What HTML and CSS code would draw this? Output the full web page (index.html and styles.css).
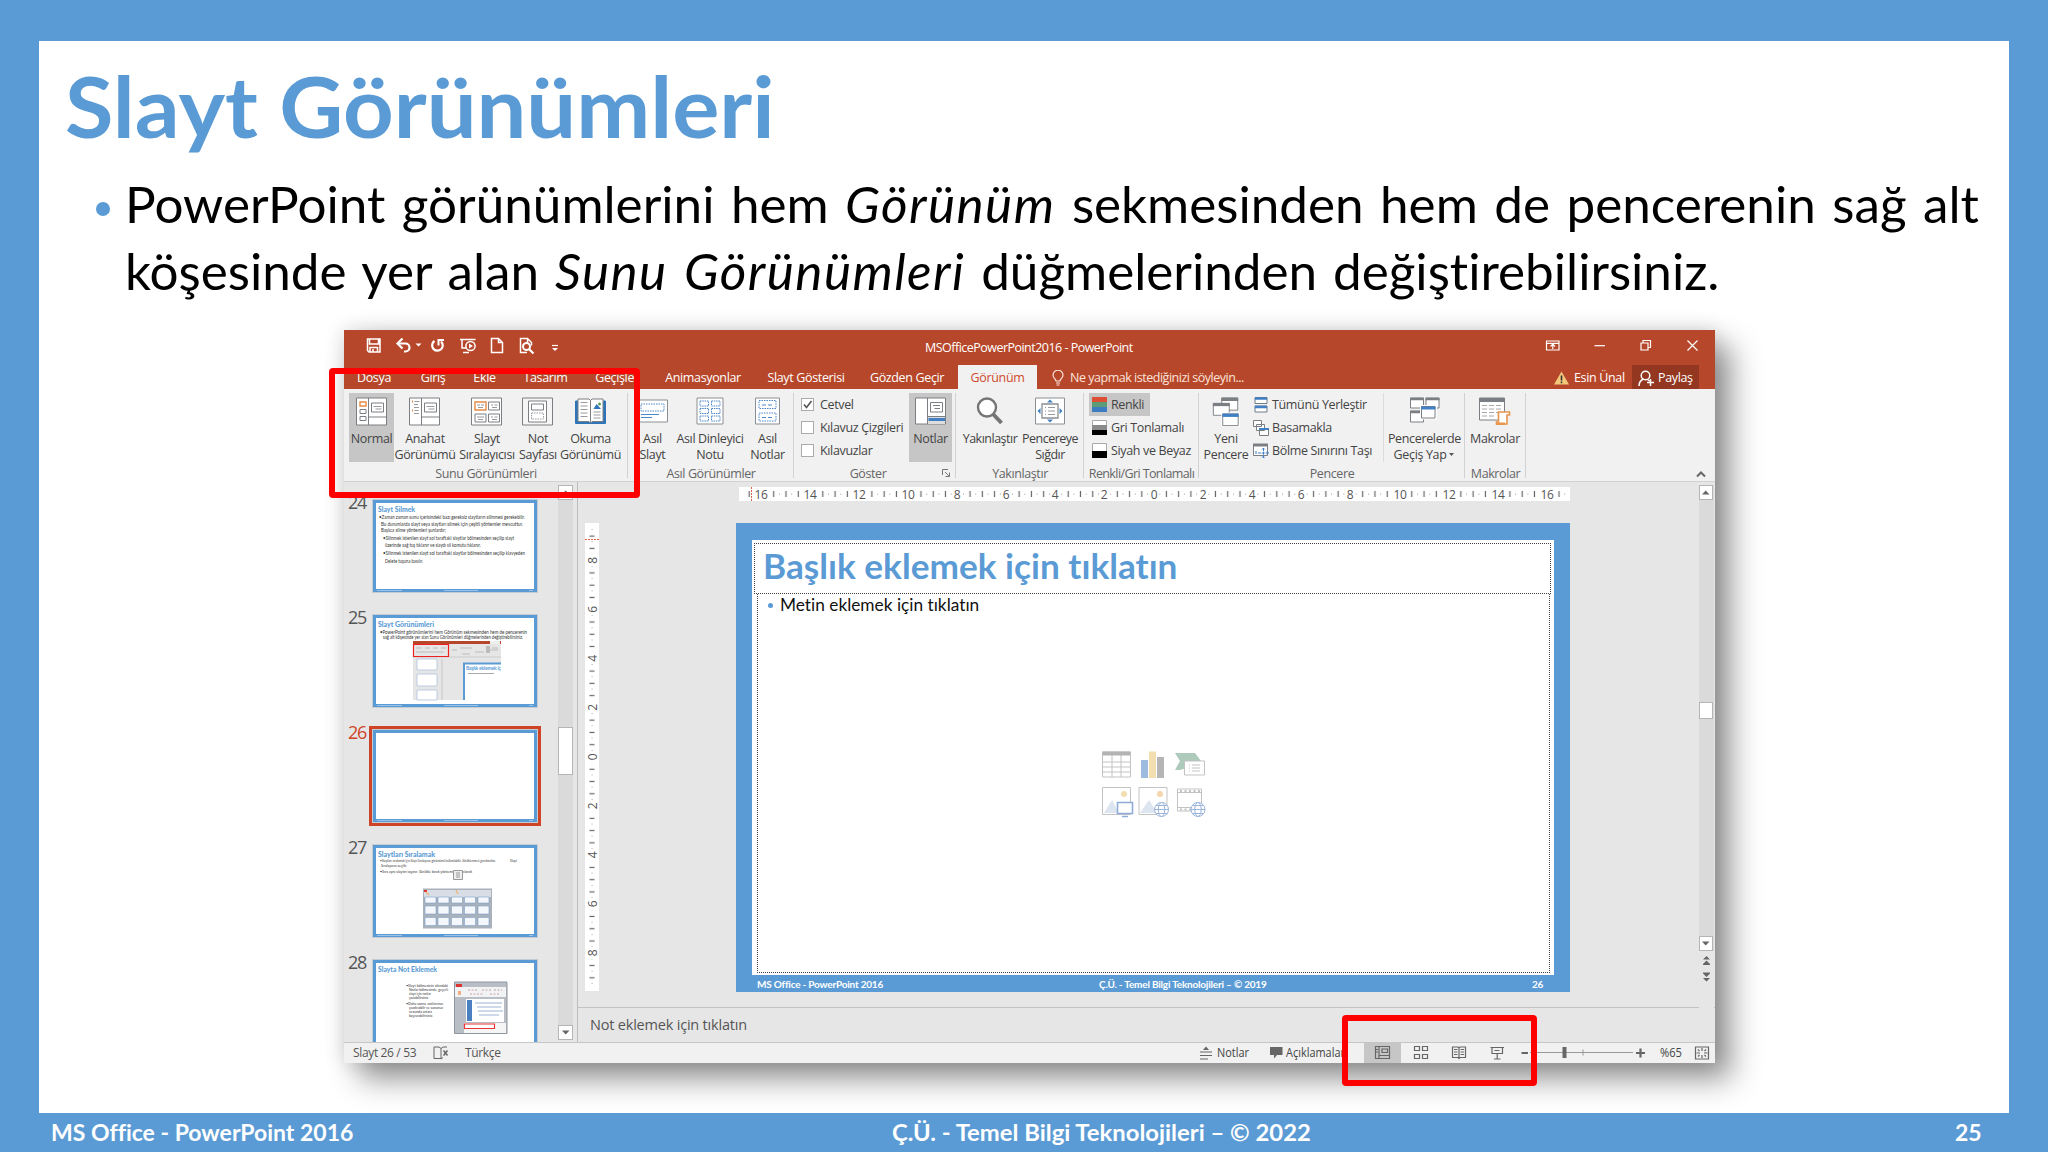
FILE: index.html
```html
<!DOCTYPE html>
<html lang="tr">
<head>
<meta charset="utf-8">
<title>Slayt Görünümleri</title>
<link rel="stylesheet" href="styles.css">
</head>
<body>
<div class="page">
<main class="sheet">
  <h1><span class="fit fit-title">Slayt Görünümleri</span></h1>
  <div class="bullet-text">
    <span class="dot"></span>
    <p><span class="fit fit-l1">PowerPoint görünümlerini hem <i>Görünüm</i> sekmesinden hem de pencerenin sağ alt</span>
    <span class="fit fit-l2">köşesinde yer alan <i>Sunu Görünümleri</i> düğmelerinden değiştirebilirsiniz.</span></p>
  </div>

  <section class="window">
    <header class="titlebar">
      <svg class="quick" width="220" height="35" viewBox="344 330 220 35" fill="none" stroke="#fff" stroke-width="1.5">
        <path d="M367.500 339h12.500v13h-11l-1.500-1.500zM369.500 339v5h9v-5M370 352v-4.500h7.500v4.500M373 349v3"/>
        <path d="M399 343.500h6.500a4 4 0 0 1 0 8h-1.500" stroke-width="2.200"/><path d="M402.500 338.500l-5 5 5 5" stroke-width="2.200"/>
        <path d="M415.500 343.500h6l-3 3z" fill="#fff" stroke="none"/>
        <path d="M434.500 341a5.300 5.300 0 1 0 6.500.500" stroke-width="2.200"/><path d="M438.500 345.500v-5.500h5.500" stroke-width="2"/>
        <path d="M460 339.500h15.500M462 340v8h4M463 352.500h6"/><circle cx="470.500" cy="346" r="4.600"/><path d="M469 343.500l4 2.500-4 2.500z" fill="#fff" stroke="none"/>
        <path d="M491.500 338.500h7l4 4v10h-11zM498.500 338.500v4h4"/>
        <path d="M527 352.500h-6.500v-14h7l4 4v3M527.500 338.500v4"/><circle cx="526.500" cy="346.500" r="3.500" stroke-width="2"/><path d="M529 349l4.500 4.500" stroke-width="2.200"/>
        <path d="M552 345.500h6" stroke-width="1.200"/><path d="M552 348h6l-3 3z" fill="#fff" stroke="none"/>
      </svg>
      <div class="caption">MSOfficePowerPoint2016 - PowerPoint</div>
      <svg class="sys" width="170" height="35" viewBox="1545 330 170 35" fill="none" stroke="#fff" stroke-width="1.200">
        <path d="M1546.500 341h12.500v9h-12.500zM1546.500 343.300h12.500M1552.800 349v-4.500M1550.500 346.500l2.300-2.300 2.300 2.300"/>
        <path d="M1594.500 345.700h10.500"/>
        <path d="M1641 343h7v7h-7zM1643 343v-2.500h7.500v7h-2.500"/>
        <path d="M1687.500 340.500l10 10M1697.500 340.500l-10 10"/>
      </svg>
    </header>

    <nav class="tabs">
      <span>Dosya</span><span>Giriş</span><span>Ekle</span><span>Tasarım</span><span>Geçişler</span><span>Animasyonlar</span><span>Slayt Gösterisi</span><span>Gözden Geçir</span><span class="active">Görünüm</span>
      <div class="tell">
        <svg width="12" height="16" viewBox="0 0 12 16" fill="none" stroke="#fbe3dc" stroke-width="1.200"><path d="M4 11c0-2-3-3-3-5.800a5 5 0 0 1 10 0C11 8 8 9 8 11zM4 13h4M4.500 15h3"/></svg>
        <span>Ne yapmak istediğinizi söyleyin...</span>
      </div>
      <div class="user">
        <svg width="15" height="14" viewBox="0 0 15 14"><path d="M7.500.500L15 13.500H0z" fill="#f3c77c"/><path d="M7.500 4.500v5M7.500 10.500v1.800" stroke="#333" stroke-width="1.600"/></svg>
        <span>Esin Ünal</span>
      </div>
      <div class="share">
        <svg width="17" height="17" viewBox="0 0 17 17" fill="none" stroke="#fff" stroke-width="1.500"><circle cx="7.500" cy="5.500" r="4.300"/><path d="M1 16c0-4 2-6 4.500-7M9.500 9.500l2 1.500M12.500 9v7M9 12.500h7"/></svg>
        <span>Paylaş</span>
      </div>
    </nav>

    <div class="ribbon">
      <section class="group g-views">
        <div class="items">
          <div class="big on">
            <svg width="32" height="30" viewBox="0 0 32 30" fill="#fff" stroke="#7b7f83"><path d="M.5 1h30v27H.5zM12.500 1v27M12.500 20h18"/><path d="M4 12.500h6v4H4zM4 19.500h6v4H4zM15.500 6h12v9h-12z"/><path d="M4 5h6v4H4z" stroke="#e38b45" stroke-width="1.400"/><path d="M17.500 9.500h8M19.500 12h6" stroke="#9a9a9a"/></svg>
            <span>Normal</span>
          </div>
          <div class="big">
            <svg width="32" height="30" viewBox="0 0 32 30" fill="#fff" stroke="#7b7f83"><path d="M.5 1h30v27H.5zM12.500 1v27M12.500 20h18"/><path d="M15.500 6h12v9h-12z"/><path d="M3 4.500h1M3 13.500h1" stroke="#e38b45" stroke-width="2"/><path d="M5.500 4.500h5M5 7.500h4M5 10.500h5M5.500 13.500h4M5 16.500h5M17.500 9.500h8M19.500 12h6" stroke="#9a9a9a"/></svg>
            <span>Anahat<br>Görünümü</span>
          </div>
          <div class="big">
            <svg width="32" height="30" viewBox="0 0 32 30" fill="#fff" stroke="#7b7f83"><path d="M.5 1h30v27H.5z"/><path d="M17.500 5h11v8h-11zM4 17h11v8H4zM17.500 17h11v8h-11z"/><path d="M4 5h11v8H4z" stroke="#e38b45" stroke-width="1.400"/><path d="M6 8h3M10 8h3M7 10.500h5M20 8h2M23.500 8h3M21 10.500h5M6 20h7M7 22.500h5M20 20h2M23.500 20h3M21 22.500h5" stroke="#9a9a9a"/></svg>
            <span>Slayt<br>Sıralayıcısı</span>
          </div>
          <div class="big">
            <svg width="32" height="30" viewBox="0 0 32 30" fill="#fff" stroke="#7b7f83"><path d="M.5 1h30v27H.5z" fill="#f5f5f5"/><path d="M6.500 4h18v21h-18z"/><path d="M9.500 7h12v6h-12z"/><path d="M9.500 16h12v6h-12z" stroke-dasharray="1.500 1" stroke="#9a9a9a"/></svg>
            <span>Not<br>Sayfası</span>
          </div>
          <div class="big">
            <svg width="32" height="30" viewBox="0 0 32 30" fill="#fff" stroke="#7b7f83"><path d="M.5 4h30v22.500H.5z" fill="#2f74b9" stroke="#2f74b9"/><path d="M3 2h11l1.500 1.500L17 2h11v22.500H17L15.500 26 14 24.500H3zM15.500 3.500V26"/><path d="M5.500 5.500h7M5.500 9h7M5.500 12.500h7M5.500 16h7M5.500 19.500h7M18.500 15h7M18.500 18h7M18.500 21h7" stroke="#9a9a9a"/><path d="M18.500 12l3-5 4.500 5z" fill="#2f74b9" stroke="none"/><circle cx="24.500" cy="7" r="1.500" fill="#5a9a55" stroke="none"/></svg>
            <span>Okuma<br>Görünümü</span>
          </div>
        </div>
        <div class="label">Sunu Görünümleri</div>
      </section>

      <section class="group g-masters">
        <div class="items">
          <div class="big">
            <svg width="32" height="30" viewBox="0 0 32 30" fill="#fff" stroke="#8a8f93"><path d="M.5 3h30v22H.5z"/><path d="M4 7h23v7H4z" stroke="#4c87c6" stroke-dasharray="1.500 1"/><path d="M4 17.500h18M4 20.500h11" stroke="#4c87c6"/></svg>
            <span>Asıl<br>Slayt</span>
          </div>
          <div class="big">
            <svg width="28" height="30" viewBox="0 0 28 30" fill="#fff" stroke="#8a8f93"><path d="M1 1h26v26H1z"/><path d="M4 4h8.500v5H4zM15.500 4H24v5h-8.500zM4 11.500h8.500v5H4zM15.500 11.500H24v5h-8.500zM4 19h8.500v5H4zM15.500 19H24v5h-8.500z" stroke="#4c87c6" stroke-dasharray="1.500 .8"/></svg>
            <span>Asıl Dinleyici<br>Notu</span>
          </div>
          <div class="big">
            <svg width="28" height="30" viewBox="0 0 28 30" fill="#fff" stroke="#8a8f93"><path d="M1.500 1h24v26h-24z"/><path d="M5 3.500h17v8H5zM5 16h17v8H5z" stroke="#4c87c6" stroke-dasharray="1.500 1"/><path d="M8 8h4M14 8h4M8 20.500h4M14 20.500h4" stroke="#4c87c6"/></svg>
            <span>Asıl<br>Notlar</span>
          </div>
        </div>
        <div class="label">Asıl Görünümler</div>
      </section>

      <section class="group g-show">
        <div class="items">
          <div class="rows checks">
            <div><i class="box"><svg width="11" height="11" viewBox="0 0 11 11" fill="none" stroke="#555" stroke-width="1.600"><path d="M2 5.500l2.500 3L9.500 2"/></svg></i>Cetvel</div>
            <div><i class="box"></i>Kılavuz Çizgileri</div>
            <div><i class="box"></i>Kılavuzlar</div>
          </div>
          <div class="big on">
            <svg width="32" height="30" viewBox="0 0 32 30" fill="#fff" stroke="#7b7f83"><path d="M.5 1h30v26H.5z"/><path d="M12.500 1v26M12.500 19.500h18"/><path d="M13 20h17v7H13z" fill="#ddd" stroke="none"/><path d="M13.500 22.500h16.500" stroke="#4180c4" stroke-width="3"/><path d="M15.500 5.500h12v9.500h-12zM18 8.500h7M19.500 11.500h5.500"/></svg>
            <span>Notlar</span>
          </div>
        </div>
        <div class="label">Göster</div>
        <svg class="launcher" width="8" height="8" viewBox="0 0 8 8" fill="none" stroke="#777"><path d="M.5 6V.5H6M3 3l4 4M7.500 3.500v4h-4"/></svg>
      </section>

      <section class="group g-zoom">
        <div class="items">
          <div class="big">
            <svg width="30" height="30" viewBox="0 0 30 30" fill="#fff" stroke="#757575"><path d="M18 17l8.500 9" stroke-width="4"/><circle cx="12" cy="10.500" r="9" stroke-width="2.400"/></svg>
            <span>Yakınlaştır</span>
          </div>
          <div class="big">
            <svg width="30" height="30" viewBox="0 0 30 30" fill="#fff" stroke="#8a8f93"><path d="M.5 1h29v26H.5z"/><path d="M7 7h16v14H7z" stroke-width="1.300"/><path d="M10 10.500h1M13 10.500h7M10 14h1M13 14h7M10 17.500h1M13 17.500h7" stroke="#999"/><path d="M12 5.500l3-3 3 3zM12 22.500l3 3 3-3zM5.500 11l-3 3 3 3zM24.500 11l3 3-3 3z" fill="#4180c4" stroke="none"/></svg>
            <span>Pencereye<br>Sığdır</span>
          </div>
        </div>
        <div class="label">Yakınlaştır</div>
      </section>

      <section class="group g-color">
        <div class="items">
          <div class="rows">
            <div class="on"><svg width="15" height="15"><path d="M0 0h15v5H0z" fill="#dd4f35"/><path d="M0 5h15v5H0z" fill="#5c9b77"/><path d="M0 10h15v5H0z" fill="#3c7cc2"/></svg>Renkli</div>
            <div><svg width="15" height="15"><path d="M.5.500h14v14H.5z" fill="#fff" stroke="#aaa"/><path d="M0 5h15v5H0z" fill="#8b8b8b"/><path d="M0 10h15v5H0z"/></svg>Gri Tonlamalı</div>
            <div><svg width="15" height="15"><path d="M.5.500h14v14H.5z" fill="#fff" stroke="#aaa"/><path d="M0 8h15v7H0z"/></svg>Siyah ve Beyaz</div>
          </div>
        </div>
        <div class="label">Renkli/Gri Tonlamalı</div>
      </section>

      <section class="group g-window">
        <div class="items">
          <div class="big">
            <svg width="28" height="32" viewBox="0 0 28 32" fill="#fff" stroke="#7b7f83"><path d="M9.500 1h17v13h-17z"/><path d="M9 2.500h18" stroke-width="3.500"/><path d="M.5 7h17v12.500H.5z"/><path d="M0 8h18" stroke-width="3.500"/><path d="M10.500 18h17v13h-17z" stroke="#fff" stroke-width="3"/><path d="M10.500 18h16.500v12.500H10.500z"/><path d="M10 19.500h17.500" stroke="#4180c4" stroke-width="3.500"/></svg>
            <span>Yeni<br>Pencere</span>
          </div>
          <div class="rows">
            <div><svg width="16" height="16" viewBox="0 0 16 16" fill="#fff" stroke="#6f7a86"><path d="M2 .500h12v6H2zM2 9h12v6H2z"/><path d="M2 1.500h12M2 10h12" stroke="#4180c4" stroke-width="2.500"/></svg>Tümünü Yerleştir</div>
            <div><svg width="16" height="16" viewBox="0 0 16 16" fill="#fff" stroke="#7b7f83"><path d="M.5.500h8v6h-8zM3.500 4.500h8v6h-8zM6.500 8.500h9v7h-9z"/><path d="M6 9h10" stroke="#4180c4" stroke-width="2"/></svg>Basamakla</div>
            <div><svg width="16" height="16" viewBox="0 0 16 16" fill="#fff" stroke="#7b7f83"><path d="M.5 1.500h14v11H.5z"/><path d="M0 2h15" stroke-width="3"/><path d="M10.500 5v10M5 10h10.500M9 6.500L10.500 5 12 6.500M9 13.500l1.500 1.500 1.500-1.500M14 8.500l1.500 1.500-1.500 1.500M3 8v3" stroke="#4180c4" stroke-dasharray="3 .7" fill="none"/></svg>Bölme Sınırını Taşı</div>
          </div>
          <div class="big ruled">
            <svg width="30" height="30" viewBox="0 0 30 30" fill="#fff" stroke="#7b7f83"><path d="M.5 1h13v10H.5zM16 1h13v10H16zM.5 14h13v11H.5z"/><path d="M0 2h14M15.500 2h14M0 15h14" stroke-width="2.500"/><path d="M11.500 9.500h14v11.500h-14z" stroke="#fff" stroke-width="3"/><path d="M11.500 9.500h13.500v11.500h-13.500z"/><path d="M11 11h14.500" stroke="#4180c4" stroke-width="3"/></svg>
            <span>Pencerelerde<br>Geçiş Yap <svg class="caret" width="6" height="4"><path d="M0 0h5L2.500 3z" fill="#555"/></svg></span>
          </div>
        </div>
        <div class="label">Pencere</div>
      </section>

      <section class="group g-macros">
        <div class="items">
          <div class="big">
            <svg width="32" height="30" viewBox="0 0 32 30" fill="#fff" stroke="#7b7f83"><path d="M.5 1h25v22H.5z"/><path d="M0 3h26" stroke-width="4"/><path d="M3 8.500h5M10 8.500h5M17 8.500h5M3 12h5M10 12h5M17 12h5M3 15.500h5M10 15.500h5M17 15.500h5M3 19h5M10 19h5" stroke="#aaa"/><path d="M19.500 15h11v3H28v9H17.500v-2h2z" stroke="#e8954d" stroke-width="1.600"/><path d="M17 25.500h9v2.500h-9z" fill="#e8954d" stroke="none"/></svg>
            <span>Makrolar</span>
          </div>
        </div>
        <div class="label">Makrolar</div>
      </section>
      <svg class="collapse" width="10" height="7" viewBox="0 0 10 7" fill="none" stroke="#666" stroke-width="2"><path d="M1 5.500l4-4 4 4"/></svg>
    </div>

    <div class="workspace">
      <aside class="thumbs">
        <ol>
          <li><b>24</b>
            <svg width="166" height="94" viewBox="0 0 166 94"><rect x="2.500" y="2.500" width="161" height="89" fill="#fff"/><g class="ttl"><text x="6" y="13" textLength="37" lengthAdjust="spacingAndGlyphs">Slayt Silmek</text></g>
              <g class="tiny"><text x="7" y="20" textLength="146" lengthAdjust="spacingAndGlyphs">•Zaman zaman sunu içerisindeki bazı gereksiz slaytların silinmesi gerekebilir.</text><text x="9" y="27" textLength="142" lengthAdjust="spacingAndGlyphs">Bu durumlarda slayt veya slaytları silmek için çeşitli yöntemler mevcuttur.</text><text x="9" y="33" textLength="65" lengthAdjust="spacingAndGlyphs">Başlıca silme yöntemleri şunlardır;</text><text x="11" y="41" textLength="131" lengthAdjust="spacingAndGlyphs">•Silinmek istenilen slayt sol taraftaki slaytlar bölmesinden seçilip slayt</text><text x="13" y="47.500" textLength="96" lengthAdjust="spacingAndGlyphs">üzerinde sağ tuş tıklanır ve slaydı sil komutu tıklanır.</text><text x="11" y="56" textLength="142" lengthAdjust="spacingAndGlyphs">•Silinmek istenilen slayt sol taraftaki slaytlar bölmesinden seçilip klavyeden</text><text x="13" y="63.500" textLength="38" lengthAdjust="spacingAndGlyphs">Delete tuşuna basılır.</text></g>
              <use href="#frame"/></svg></li>
          <li><b>25</b>
            <svg width="166" height="94" viewBox="0 0 166 94"><rect x="2.500" y="2.500" width="161" height="89" fill="#fff"/><g class="ttl"><text x="6" y="13" textLength="56" lengthAdjust="spacingAndGlyphs">Slayt Görünümleri</text></g>
              <g class="tiny"><text x="8" y="19.500" textLength="147" lengthAdjust="spacingAndGlyphs">•PowerPoint görünümlerini hem Görünüm sekmesinden hem de pencerenin</text><text x="11" y="24.500" textLength="140" lengthAdjust="spacingAndGlyphs">sağ alt köşesinde yer alan Sunu Görünümleri düğmelerinden değiştirebilirsiniz.</text></g>
              <path d="M41 27h88v59H41z" fill="#e6e6e6"/><path d="M41 27h77v3H41z" fill="#b7472a"/><path d="M118 27h11v3h-11z" fill="#eee"/><path d="M128 27h1v3h-1z" fill="#b7472a"/><path d="M44 34h6M53 34h5M61 34h5M69 34h5M80 36h5M88 34h12M103 38h9M120 34h6M44 38h28M90 40h8M116 36h10" stroke="#bbb" stroke-width="1.200"/><path d="M114 32h4v7h-4z" fill="#bbb"/><path d="M41 43h88" stroke="#ccc"/>
              <g fill="#fff" stroke="#bccbe0"><path d="M45 45h20v11H45zM45 60h20v12H45zM45 76h20v10H45z"/></g><path d="M70 45v41" stroke="#d0d0d0" stroke-width="1.500"/><path d="M91 86V49h38v37z" fill="#fff"/><path d="M92 86V49.500h37" fill="none" stroke="#5b9bd5" stroke-width="2"/><text x="94" y="56" class="mini-ttl" textLength="35">Başlık eklemek iç</text><path d="M96 59.500h26" stroke="#aaa"/><path d="M41.500 30.500h35v12h-35z" fill="none" stroke="#f02020" stroke-width="1.200"/>
              <use href="#frame"/></svg></li>
          <li class="sel"><b>26</b>
            <svg width="166" height="94" viewBox="0 0 166 94"><rect x="2.500" y="2.500" width="161" height="89" fill="#fff"/><use href="#frame"/></svg></li>
          <li><b>27</b>
            <svg width="166" height="94" viewBox="0 0 166 94"><rect x="2.500" y="2.500" width="161" height="89" fill="#fff"/><g class="ttl"><text x="6" y="13" textLength="57" lengthAdjust="spacingAndGlyphs">Slaytları Sıralamak</text></g>
              <g class="tiny sm"><text x="8" y="18" textLength="116" lengthAdjust="spacingAndGlyphs">•Slaytları sıralamak için Slayt Sıralayıcısı görünümü kullanılabilir. Sürüklenmesi gerekmekte.</text><text x="138" y="18" textLength="7" lengthAdjust="spacingAndGlyphs">Slayt</text><text x="9" y="22.500" textLength="26" lengthAdjust="spacingAndGlyphs">Sıralayıcısı seçilir.</text><text x="8" y="29" textLength="92" lengthAdjust="spacingAndGlyphs">•Sıra aynı slaytın taşınır. Sürükle bırak yöntemi kullanılarak</text></g>
              <path d="M81.500 26.500h9v9h-9z" fill="#eee" stroke="#999"/><path d="M84 29h4M84 31h4M84 33h4" stroke="#777" stroke-width=".7"/>
              <path d="M51 44.500h69v40H51z" fill="#a9b1bb"/><path d="M52 46h67v7H52z" fill="#d8dde6"/><path d="M52 46h3v2h-3z" fill="#d33"/><path d="M54 48l3 3M84 46l2 4" stroke="#edb878" stroke-width="1.500"/>
              <g fill="#f4f7fb" stroke="#7fa3cc" stroke-width=".6"><path d="M53 53h11v6H53zM66 53h11v6H66zM79.500 53h11v6h-11zM92.500 53h11v6h-11zM106 53h11v6h-11zM53 62h11v8H53zM66 62h11v8H66zM79.500 62h11v8h-11zM92.500 62h11v8h-11zM106 62h11v8h-11zM53 73.500h11v8H53zM66 73.500h11v8H66zM79.500 73.500h11v8h-11zM92.500 73.500h11v8h-11zM106 73.500h11v8h-11z"/></g>
              <use href="#frame"/></svg></li>
          <li><b>28</b>
            <svg width="166" height="84" viewBox="0 0 166 84"><rect x="2.500" y="2.500" width="161" height="89" fill="#fff"/><g class="ttl"><text x="6" y="13" textLength="59" lengthAdjust="spacingAndGlyphs">Slayta Not Eklemek</text></g>
              <g class="tiny sm"><text x="34" y="28" textLength="42" lengthAdjust="spacingAndGlyphs">•Slayt bölmesinin altındaki</text><text x="37" y="32" textLength="39" lengthAdjust="spacingAndGlyphs">Notlar bölmesinde, geçerli</text><text x="37" y="36" textLength="22" lengthAdjust="spacingAndGlyphs">slayt için notlar</text><text x="37" y="40" textLength="20" lengthAdjust="spacingAndGlyphs">yazabilirsiniz.</text><text x="34" y="46" textLength="37" lengthAdjust="spacingAndGlyphs">•Daha sonra, notlarınızı</text><text x="37" y="50" textLength="34" lengthAdjust="spacingAndGlyphs">yazdırabilir ve sununuz</text><text x="37" y="54" textLength="23" lengthAdjust="spacingAndGlyphs">sırasında onlara</text><text x="37" y="58" textLength="24" lengthAdjust="spacingAndGlyphs">başvurabilirsiniz.</text></g>
              <path d="M82.500 23h52.500v51.500H82.500z" fill="#b9bec6" stroke="#8f969f"/><path d="M83 28h51v10H83z" fill="#f2f3f5"/><path d="M84 25h6v3h-6z" fill="#d33"/><path d="M96 31h10M110 31h9M122 31h8M98 35h14M118 35h9" stroke="#c9a0a0" stroke-dasharray="2 1.500"/><path d="M86 32h3v4h-3z" fill="#f0b080"/><path d="M94 40h38v23H94z" fill="#fff"/><path d="M95 41h5v21h-5z" fill="#4a7fc0"/><path d="M103 44h27M105 48h24M106 52h25M107 56h20" stroke="#9bb2d3"/><path d="M92 64h42v10H92z" fill="#f5f5f5"/><path d="M92.500 65h30v4.500h-30z" fill="#fff" stroke="#e33" stroke-width="1.200"/>
              <use href="#frame"/></svg></li>
        </ol>
        <div class="scroll left">
          <i class="btn"><svg width="8" height="5"><path d="M0 4.500h7.500L3.700.500z" fill="#666"/></svg></i>
          <i class="thumb"></i>
          <i class="btn"><svg width="8" height="5"><path d="M0 .500h7.500L3.700 4.500z" fill="#666"/></svg></i>
        </div>
      </aside>

      <div class="editor">
        <div class="stage">
          <svg class="vruler" width="14" height="468" viewBox="0 0 14 468">
            <defs>
              <pattern id="vticks" width="14" height="12.270" y="227.870" patternUnits="userSpaceOnUse"><path d="M4.500 6.100h5" stroke="#666" stroke-width="1.200"/><path d="M6.500 12h1.200" stroke="#999"/></pattern>
              <pattern id="hticks" width="12.270" height="14" x="409" patternUnits="userSpaceOnUse"><path d="M6.100 4v6" stroke="#666" stroke-width="1.200"/><path d="M12 6.500v1.200" stroke="#999"/></pattern>
              <g id="frame"><rect x=".5" y=".5" width="165" height="93" fill="none" stroke="#c3cbd3"/><path d="M2.500 2.500h161v89h-161z" fill="none" stroke="#5b9bd5" stroke-width="3"/><path d="M5 91.500h25M72 91.500h34M157 91.500h4" stroke="#a9cbea" stroke-width=".8"/></g>
            </defs>
            <rect width="14" height="468" fill="#fff"/><rect width="14" height="458" y="4" fill="url(#vticks)"/>
            <g class="num"><rect y="31" x="1" width="12" height="12"/><text transform="translate(11.500 37.500) rotate(-90)">8</text><rect y="80" x="1" width="12" height="12"/><text transform="translate(11.500 86.500) rotate(-90)">6</text><rect y="129" x="1" width="12" height="12"/><text transform="translate(11.500 135.500) rotate(-90)">4</text><rect y="178" x="1" width="12" height="12"/><text transform="translate(11.500 184.500) rotate(-90)">2</text><rect y="228" x="1" width="12" height="12"/><text transform="translate(11.500 234) rotate(-90)">0</text><rect y="277" x="1" width="12" height="12"/><text transform="translate(11.500 283) rotate(-90)">2</text><rect y="326" x="1" width="12" height="12"/><text transform="translate(11.500 332) rotate(-90)">4</text><rect y="375" x="1" width="12" height="12"/><text transform="translate(11.500 381) rotate(-90)">6</text><rect y="424" x="1" width="12" height="12"/><text transform="translate(11.500 430) rotate(-90)">8</text></g>
            <path d="M0 16.500h14" stroke="#d9604a" stroke-dasharray="2 1"/>
          </svg>
          <div class="canvas">
            <svg class="hruler" width="831" height="14" viewBox="0 0 831 14">
              <rect width="831" height="14" fill="#fff"/><rect x="4" width="825" height="14" fill="url(#hticks)"/>
              <g class="num"><rect x="14" y="1" width="16" height="12"/><text x="22" y="11.500">16</text><rect x="63" y="1" width="16" height="12"/><text x="71" y="11.500">14</text><rect x="112" y="1" width="16" height="12"/><text x="120" y="11.500">12</text><rect x="161" y="1" width="16" height="12"/><text x="169" y="11.500">10</text><rect x="213" y="1" width="10" height="12"/><text x="218" y="11.500">8</text><rect x="262" y="1" width="10" height="12"/><text x="267" y="11.500">6</text><rect x="311" y="1" width="10" height="12"/><text x="316" y="11.500">4</text><rect x="360" y="1" width="10" height="12"/><text x="365" y="11.500">2</text><rect x="410" y="1" width="10" height="12"/><text x="415" y="11.500">0</text><rect x="459" y="1" width="10" height="12"/><text x="464" y="11.500">2</text><rect x="508" y="1" width="10" height="12"/><text x="513" y="11.500">4</text><rect x="557" y="1" width="10" height="12"/><text x="562" y="11.500">6</text><rect x="606" y="1" width="10" height="12"/><text x="611" y="11.500">8</text><rect x="653" y="1" width="16" height="12"/><text x="661" y="11.500">10</text><rect x="702" y="1" width="16" height="12"/><text x="710" y="11.500">12</text><rect x="751" y="1" width="16" height="12"/><text x="759" y="11.500">14</text><rect x="800" y="1" width="16" height="12"/><text x="808" y="11.500">16</text></g>
              <path d="M12.500 0v14" stroke="#d9604a" stroke-dasharray="2 1"/>
            </svg>
            <article class="slide">
              <div class="slide-body">
                <h2><span class="fit fit-st">Başlık eklemek için tıklatın</span></h2>
                <div class="content">
                  <p><i class="pt"></i><span>Metin eklemek için tıklatın</span></p>
                  <svg class="insert" width="110" height="72" viewBox="1098 748 110 72" fill="#fff" stroke="#c3c3c3">
                    <path d="M1102.500 752h28v25h-28zM1112 752v25M1121 752v25M1102.500 762h28M1102.500 767h28M1102.500 772h28"/><path d="M1102.500 753.500h28" stroke="#b3b3b3" stroke-width="4"/>
                    <g stroke="none"><path d="M1141 760h7v18h-7z" fill="#9dbadf"/><path d="M1149 751.500h7v26.500h-7z" fill="#f3deb0"/><path d="M1157 757h7v21h-7z" fill="#b5b5b5"/><path d="M1175 753h20l6 8v8h-18l-3 1h-5l5-9z" fill="#aecabb"/></g>
                    <path d="M1184.500 761h20v14h-20z"/><path d="M1189 765h1M1192 765h8M1189 768h1M1192 768h8M1189 771h1M1192 771h8"/>
                    <path d="M1102.500 787.500h28v27h-28zM1139 787.500h28v27h-28z"/><g stroke="none"><circle cx="1124" cy="794" r="3" fill="#f3deb0"/><circle cx="1160" cy="794" r="3" fill="#f3d5ae"/><path d="M1104 813l8-13 7 13zM1140 813l9-13 8 13z" fill="#dde5f1"/></g>
                    <path d="M1117.500 802.500h15v11h-15z" stroke="#8facd9" stroke-width="1.600"/><path d="M1122 816.500h6" stroke="#8facd9" stroke-width="1.500"/>
                    <path d="M1177.500 789h24v22h-24zM1177.500 792.500h24M1177.500 807.500h24"/><path d="M1180 791h20M1180 809.500h20" stroke-width="2" stroke-dasharray="2 2.500"/>
                    <g id="globe" stroke="#9ab4dc"><circle cx="1161.500" cy="809.500" r="7"/><ellipse cx="1161.500" cy="809.500" rx="3.200" ry="7"/><path d="M1154.500 809.500h14M1156 805.500h11M1156 813.500h11"/></g>
                    <use href="#globe" x="36.500"/>
                  </svg>
                </div>
              </div>
              <footer><span>MS Office - PowerPoint 2016</span><span>Ç.Ü. - Temel Bilgi Teknolojileri – © 2019</span><span>26</span></footer>
            </article>
          </div>
          <div class="scroll right">
            <i class="btn"><svg width="8" height="5"><path d="M0 4.500h7.500L3.700.500z" fill="#666"/></svg></i>
            <i class="thumb"></i>
            <i class="btn"><svg width="8" height="5"><path d="M0 .500h7.500L3.700 4.500z" fill="#666"/></svg></i>
            <svg class="pg" width="14" height="57" viewBox="0 0 14 57" fill="#666"><path d="M3.500 8.500L7 5l3.500 3.500zM3.500 13L7 9.500l3.500 3.500zM3.500 14h7v-1h-7zM3.500 27L7 30.500 10.500 27zM3.500 22.500L7 26l3.500-3.500zM3.500 21.500h7v1h-7z"/></svg>
          </div>
        </div>
        <div class="notes">Not eklemek için tıklatın</div>
      </div>
    </div>

    <footer class="status">
      <span class="s-no">Slayt 26 / 53</span>
      <svg width="16" height="14" viewBox="0 0 16 14" fill="none" stroke="#666"><path d="M8 12.500H1V1h5l2 1.500V13M8 2.500L10 1h4M8 13l2-1.500"/><path d="M10.500 4.500l4 5M14.500 4.500l-4 5" stroke-width="1.500"/></svg>
      <span class="s-lang">Türkçe</span>
      <svg class="s-tools" width="515" height="21" viewBox="1200 1042 515 21" fill="none" stroke="#666" stroke-width="1.200">
        <path d="M1364 1043h37v20h-37z" fill="#c6c6c6" stroke="none"/>
        <path d="M1200 1052h12M1200 1055.500h12M1200 1059h8"/><path d="M1203 1050l3-3.500 3 3.500z" fill="#666" stroke="none"/>
        <path d="M1270 1047h12.500v8h-5.500l-3 3.500v-3.500h-4z" fill="#666" stroke="none"/>
        <path d="M1375.500 1046.500h14v12h-14zM1379 1046.500v12M1379 1055.500h10.500M1382 1049h5.500v3.500h-5.500zM1376 1049.500h2M1376 1052h2"/>
        <path d="M1414.500 1046.500h5v4h-5zM1422.500 1046.500h5v4h-5zM1414.500 1054.500h5v4h-5zM1422.500 1054.500h5v4h-5z"/>
        <path d="M1452.500 1047h5.500l1 1 1-1h5.500v10.500h-5.500l-1 1-1-1h-5.500zM1459 1048v10.500M1454 1049.500h3.500M1454 1052h3.500M1454 1054.500h3.500M1460.500 1049.500h3.500M1460.500 1052h3.500M1460.500 1054.500h3.500"/>
        <path d="M1490.500 1047.500h13.500M1492 1048v5.500h10.500v-5.500M1497.200 1053.500v5M1494 1059h6.500M1494.500 1050.500h5"/>
        <path d="M1521.500 1053h6.500M1636 1053h9M1640.500 1048.500v9" stroke-width="2.200"/>
        <path d="M1530 1052.500h103M1583 1049.500v6" stroke="#999" stroke-width="1"/><path d="M1562.500 1047h4v11h-4z" fill="#666" stroke="none"/>
        <path d="M1695.500 1047h13v12h-13z"/><path d="M1702 1051v-3M1702 1055v3M1700 1053h-3.500M1704 1053h3.500M1698 1049.500l1.500 1.500M1706 1049.500l-1.500 1.500M1698 1056.500l1.500-1.500M1706 1056.500l-1.500-1.500"/>
        <g class="st"><text x="1217" y="1057" textLength="32" lengthAdjust="spacingAndGlyphs">Notlar</text><text x="1286" y="1057" textLength="59" lengthAdjust="spacingAndGlyphs">Açıklamalar</text><text x="1660" y="1056.500" textLength="22" lengthAdjust="spacingAndGlyphs">%65</text></g>
      </svg>
    </footer>
    <div class="mark mark-ribbon"></div>
    <div class="mark mark-status"></div>
  </section>
</main>
<footer class="pagefoot"><span>MS Office - PowerPoint 2016</span><span><span class="fit fit-fc">Ç.Ü. - Temel Bilgi Teknolojileri – © 2022</span></span><span>25</span></footer>
</div>
</body>
</html>
```
FILE: styles.css
```css
*{box-sizing:border-box;font-variant-ligatures:none}
body{margin:0;background:#5b9bd5;font-family:Lato,"Open Sans",sans-serif}
.page{width:2048px;height:1152px;padding:41px 39px 0;overflow:hidden;background:#5b9bd5}
.sheet{height:1072px;padding:15px 0 0 26px;background:#fff}
.fit{display:inline-block;white-space:nowrap;transform-origin:0 50%}
.fit-title{transform:scaleX(1.052)}
.fit-l1,.fit-l2{transform:scaleX(1.024)}
.fit-l1{word-spacing:3.300px}
.fit-l2{word-spacing:2.800px}
.bullet-text i{letter-spacing:1.400px}
.fit-st{transform:scaleX(1.035)}
.fit-fc{transform:scaleX(1.036)}
h1,h2,p,ol{margin:0;padding:0}
h1{height:115px;font-size:84px;line-height:100px;font-weight:700;color:#5b9bd5}
.bullet-text{display:flex;height:159px;font-size:50px;line-height:67px;color:#000}
.dot{width:14px;height:14px;margin:31px 15px 0 31px;border-radius:50%;background:#5b9bd5}
.bullet-text p{display:flex;flex-direction:column;align-items:flex-start}

/* application window */
.window{position:relative;display:flex;flex-direction:column;width:1371px;height:733px;margin-left:279px;background:#e6e6e6;font:12.5px/16px "Open Sans","Noto Sans",sans-serif;letter-spacing:-.35px;color:#444;box-shadow:0 0 20px rgba(0,0,0,.14),16px 16px 28px rgba(0,0,0,.42)}
.titlebar{display:grid;grid-template-columns:220px 1fr 170px;height:35px;background:#b7472a;color:#fff}
.caption{padding:10px 0 0 361px;white-space:nowrap;letter-spacing:-.52px}
.tabs{display:grid;grid-template-columns:60px 58px 45px 77px 66px 106px 100px 102px 79px 516px 79px 67px 1fr;height:24px;background:#b7472a;color:#fff;line-height:26px;white-space:nowrap}
.tabs>span{text-align:center}
.tabs>span:nth-child(-n+8){margin:0 -10px}
.tabs .active{background:#f1f1f1;color:#d04a2c}
.tell,.user,.share{display:flex;align-items:center;gap:6px}
.tell{padding-left:15px;color:#fbe3dc;letter-spacing:-.48px}
.user{gap:5px;padding-left:1px}
.share{padding-left:6px;gap:3px;background:#933720}

.ribbon{display:flex;height:93px;background:#f1f1f1;border-bottom:1px solid #d2d2d2;position:relative}
.group{position:relative;display:flex;flex-direction:column;height:92px;padding-top:4px;white-space:nowrap}
.group::after{content:"";position:absolute;right:0;top:4px;height:85px;border-right:1px solid #d2d2d2}
.items{display:grid;height:72px}
.label{margin-top:4px;text-align:center;color:#666;line-height:16px;letter-spacing:-.4px}
.big{display:flex;flex-direction:column;align-items:center;height:69px;padding-top:4px;text-align:center}
.big>svg{flex:none;height:30px;margin-bottom:4px}
.big>span{display:block;margin:0 -10px}
.caret{vertical-align:2px}
.on{background:#c6c6c6}
.rows{display:flex;flex-direction:column}
.rows>div{display:flex;align-items:center;gap:4px;height:23px}
.rows svg{flex:none}
.box{display:flex;flex:none;width:13px;height:13px;border:1px solid #ababab;background:#fff}
.checks>div{gap:6px}
.g-views{width:284px}.g-views .items{grid-template-columns:45px 62px 62px 40px 65px;padding-left:5px}
.g-masters{width:166px}.g-masters .items{grid-template-columns:33px 82px 33px;padding-left:8px}
.g-show{width:162px}.g-show .items{grid-template-columns:108px 43px;padding-left:7px}
.g-show .label{padding-right:14px}
.launcher{position:absolute;right:6px;bottom:4px}
.g-zoom{width:128px}.g-zoom .items{grid-template-columns:60px 60px;padding-left:4px;letter-spacing:-.5px}
.g-color{width:115px}.g-color .items{grid-template-columns:106px;padding-left:5px}
.g-color .rows>div{padding-left:3px}
.g-color .on{width:61px}
.g-color .label{letter-spacing:-.6px}
.g-window{width:266px}.g-window .items{grid-template-columns:52px 131px 82px;padding-left:1px}
.g-window .rows{padding-left:1px}
.ruled{border-left:1px solid #dcdcdc}
.g-window .rows>div{gap:3px}
.g-macros{width:61px}.g-macros .items{grid-template-columns:60px}
.collapse{margin:82px 0 0 170px}

.workspace{display:grid;grid-template-columns:234px 1fr;height:560px}
.thumbs{display:flex;overflow:hidden;border-right:1px solid #bcbcbc}
.thumbs ol{list-style:none;width:214px;padding-top:17px}
.thumbs li{display:flex;height:115px}
.thumbs li>b{width:28px;padding-left:4px;margin-top:-7px;font-weight:400;font-size:18px;line-height:20px;letter-spacing:-1.200px;color:#555}
.thumbs li>svg{flex:none}
.thumbs .sel>svg{box-shadow:0 0 0 3px #cf4426}
.thumbs .sel>b{color:#cf4426}
.ttl{font:900 8px Lato,sans-serif;letter-spacing:0;fill:#5b9bd5}
.mini-ttl{font:bold 5px Lato,sans-serif;letter-spacing:0;fill:#5b9bd5}
.tiny{font:5px Lato,sans-serif;letter-spacing:0;fill:#333}
.sm{font-size:3.800px}
.scroll{display:flex;flex-direction:column;width:15px;background:#dadada}
.scroll i{display:flex;flex:none;align-items:center;justify-content:center;width:15px;background:#fff;border:1px solid #b5b5b5}
.btn{height:15px}
.scroll.left{margin-top:3px;height:555px;background:#dadada}
.left .thumb{height:48px;margin:227px 0 250px}
.editor{display:grid;grid-template-rows:526px 34px}
.stage{display:grid;grid-template-columns:21px 1fr 16px;border-bottom:1px solid #c3c3c3}
.vruler{margin:41px 0 0 7px}
.canvas{padding:5px 0 0 137px}
.hruler{display:block;margin-left:3px}
.num{font:12px "Open Sans",sans-serif;letter-spacing:-.3px;fill:#555;text-anchor:middle}
.num rect{fill:#fff}
.scroll.right{margin-top:3px;height:522px}
.scroll.right .btn,.scroll.right .thumb{width:14px}
.right .thumb{height:17px;margin:202px 0 217px}
.pg{flex:none;width:15px;background:#e6e6e6}
.slide{width:834px;height:469px;margin-top:22px;padding:17px 16px 0;background:#5b9bd5;font-family:Lato,sans-serif;letter-spacing:0}
.slide-body{height:435px;padding:3px 3px 0 2px;background:#fff}
h2{height:51px;padding-left:8px;border:1px dotted #444;font-size:34px;line-height:43px;color:#5b9bd5}
.content{height:379px;margin:0 1px 0 3px;border:1px dotted #444;border-top:0}
.content p{display:flex;align-items:center;gap:7px;height:22px;padding-left:10px;font-size:17.300px;line-height:22px;color:#111}
.pt{width:5px;height:5px;border-radius:50%;background:#5b9bd5}
.insert{display:block;margin:132px 0 0 340px}
.slide footer{display:grid;grid-template-columns:342px 433px 1fr;padding-left:5px;color:#fff;font-size:10px;font-weight:700;line-height:18px;letter-spacing:-.2px}
.notes{padding:8px 0 0 12px;font-size:14.500px;line-height:17px;letter-spacing:-.2px;color:#555}

.status{display:flex;align-items:center;height:21px;padding-left:9px;background:#f1f1f1;border-top:1px solid #c6c6c6;font-size:12px;color:#555}
.s-no{width:80px}
.s-lang{width:751px;padding-left:16px}
.s-tools{flex:none;margin-top:-1px}
.st{font:12.500px "Open Sans",sans-serif;letter-spacing:0;fill:#444;stroke:none}

/* highlight frames laid over the window */
.mark{position:absolute;border:6px solid #f00;border-radius:4px}
.mark-ribbon{left:-15px;top:38px;width:311px;height:130px}
.mark-status{left:998px;top:685px;width:195px;height:71px}

.pagefoot{display:grid;grid-template-columns:841px 1063px 1fr;padding-left:12px;color:#fff;font-size:23px;font-weight:700;line-height:38px}
```
